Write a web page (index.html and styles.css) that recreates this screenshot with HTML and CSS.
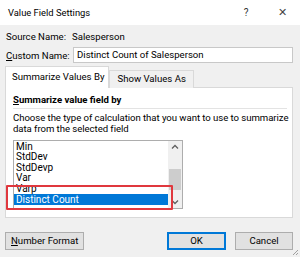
FILE: index.html
```html
<!DOCTYPE html>
<html>
<head>
<meta charset="utf-8">
<title>Value Field Settings</title>
<link rel="stylesheet" href="styles.css">
</head>
<body>
<div class="dialog">
    <!--标题栏-->
    <div class="titlebar">
        <span class="title">Value Field Settings</span>
        <span class="help">?</span>
        <span class="close">&#x2715;</span>
    </div>
    <div class="content">
        <div class="row source">
            <span class="label">Source Name:</span>
            <span class="value">Salesperson</span>
        </div>
        <div class="row custom">
            <span class="label"><u>C</u>ustom Name:</span>
            <div class="input">Distinct Count of Salesperson</div>
        </div>
        <!--选项卡-->
        <div class="tabs">
            <div class="tab active">Summarize Values By</div>
            <div class="tab">Show Values As</div>
        </div>
        <div class="panel">
            <div class="heading"><u>S</u>ummarize value field by</div>
            <p class="desc">Choose the type of calculation that you want to use to summarize<br>data from the selected field</p>
            <div class="listwrap">
                <div class="listbox">
                    <ul class="items">
                        <li>Min</li>
                        <li>StdDev</li>
                        <li>StdDevp</li>
                        <li>Var</li>
                        <li>Varp</li>
                        <li class="selected">Distinct Count</li>
                    </ul>
                    <div class="scrollbar">
                        <svg class="arrow" width="14" height="12" viewBox="0 0 14 12"><path d="M4 7.5 L7 4.5 L10 7.5" fill="none" stroke="#606060" stroke-width="1.3"/></svg>
                        <div class="track"><div class="thumb"></div></div>
                        <svg class="arrow" width="14" height="12" viewBox="0 0 14 12"><path d="M4 4.5 L7 7.5 L10 4.5" fill="none" stroke="#606060" stroke-width="1.3"/></svg>
                    </div>
                </div>
                <div class="mark"></div>
            </div>
        </div>
        <!--按钮区-->
        <div class="buttons">
            <div class="btn"><u>N</u>umber Format</div>
            <div class="spacer"></div>
            <div class="btn ok">OK</div>
            <div class="btn cancel">Cancel</div>
        </div>
    </div>
    <svg class="grip" width="8" height="8" viewBox="0 0 8 8"><path d="M7 2 L2 7 M7 5 L5 7" stroke="#a0a0a0" stroke-width="1"/></svg>
</div>
</body>
</html>
```

FILE: styles.css
```css
/*清除默认样式*/
body,div,ul,p{padding:0; margin:0;}
li{list-style:none;}
body{width:300px; height:257px; overflow:hidden; font-family:Roboto,"Liberation Sans",sans-serif; font-size:9.6px; color:#000; background:#f0f0f0;}
u{text-decoration:underline; text-underline-offset:1px;}
.dialog{width:300px; height:257px; position:relative; background:#f0f0f0;}
/*标题栏*/
.titlebar{height:25px; background:#fff; display:flex; align-items:center; padding:0 0 0 8px;}
.title{flex:1; font-size:9.4px; margin-top:-1px;}
.help{width:14px; font-size:10px; color:#333; margin-right:22px; text-align:center;}
.close{width:14px; font-size:11px; color:#444; margin-right:11px; text-align:center;}
/*内容区*/
.content{padding:0 7px 0 5px;}
.row{display:flex; align-items:center;}
.label{width:66px; padding-left:1px; white-space:nowrap;}
.source{height:14px; margin-top:4px;}
.custom{height:16px; margin-top:4px;}
.input{flex:1; height:14px; line-height:14px; border:1px solid #c8c8c8; background:#fff; padding-left:3px; margin-left:1px;}
/*选项卡*/
.tabs{display:flex; align-items:flex-end; margin-top:3px; height:22px; position:relative; z-index:1;}
.tab{height:17px; line-height:16px; padding:0 7px; border:1px solid #d9d9d9; border-bottom:none; background:#f0f0f0;}
.tab.active{height:21px; line-height:20px; background:#fff; padding:0 4px 0 6px;}
.panel{height:129px; border:1px solid #d9d9d9; background:#fff; margin-top:-1px; padding:0 5px 0 7px;}
.heading{font-weight:bold; height:20px; line-height:24px; border-bottom:1px solid #e3e3e3;}
.desc{line-height:11px; margin-top:3px; white-space:nowrap; letter-spacing:-0.05px;}
.listwrap{position:relative; margin-top:6px;}
.listbox{width:168px; height:67px; border:1px solid #adadad; background:#fff; display:flex; overflow:hidden;}
.items{flex:1; padding-top:1px;}
.items li{height:10.4px; line-height:10.4px; padding-left:2px; font-size:10px;}
.items .selected{background:#0078d7; color:#fff; height:11px; line-height:11px;}
.scrollbar{width:14px; background:#f0f0f0; display:flex; flex-direction:column;}
.arrow{display:block; flex:none;}
.track{flex:1; position:relative;}
.thumb{height:21px; background:#cdcdcd; margin:16px 1px 0;}
.mark{position:absolute; left:-7px; top:45px; width:163px; height:21px; border:2px solid #e0383e; border-radius:1px;}
/*按钮区*/
.buttons{display:flex; margin-top:14px;}
.btn{height:16px; line-height:16px; border:1px solid #adadad; background:#e1e1e1; text-align:center; padding:0 5px;}
.spacer{flex:1;}
.ok{width:55px; padding:0; border:2px solid #0078d7; line-height:14px; height:14px; margin-right:9px;}
.cancel{width:56px; padding:0;}
.grip{position:absolute; right:1px; bottom:1px;}
```
